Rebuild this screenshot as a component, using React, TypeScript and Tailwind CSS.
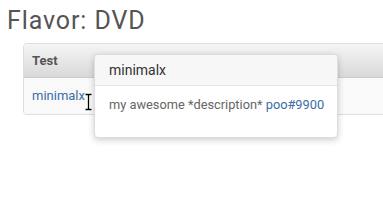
export default function App() {
  return (
    <div
      className="relative h-[214px] w-[383px] overflow-hidden bg-white"
      style={{ fontFamily: "Roboto, 'Liberation Sans', sans-serif" }}
    >
      <h2 className="pl-[7px] pt-[6px] text-[25px] leading-[29px] font-normal tracking-[0.9px] text-[#555]">
        Flavor: DVD
      </h2>

      <div className="ml-[23px] mt-[8px] w-[400px] overflow-hidden rounded-l-[4px] border border-[#ddd]">
        <div className="h-[34px] border-b border-[#ccc] bg-gradient-to-b from-[#f5f5f5] to-[#d9d9d9] pl-[8px] text-[13px] leading-[34px] font-bold text-[#555]">
          Test
        </div>
        <div className="h-[36px] bg-[#f9f9f9] pl-[8px] text-[13px] leading-[36px] text-[#3a6ea5]">
          minimalx
        </div>
      </div>

      <div className="absolute left-[94px] top-[54px] w-[244px] rounded-[4px] border border-[#ddd] bg-white shadow-[0_2px_6px_rgba(0,0,0,0.2)]">
        <div className="h-[31px] rounded-t-[4px] border-b border-[#e5e5e5] bg-[#f7f7f7] pl-[14px] text-[14px] leading-[31px] text-[#333]">
          minimalx
        </div>
        <div className="h-[51px] pl-[14px] pt-[10px] text-[12.8px] leading-[18px] text-[#666]">
          my awesome *description* <span className="text-[#3a6ea5]">poo#9900</span>
        </div>
      </div>

      <svg className="absolute left-[84px] top-[93px]" width="9" height="18" viewBox="0 0 9 18">
        <path
          d="M1.5 1.5h2.5l.5.5.5-.5h2.5M4.5 2v14M1.5 16.5h2.5l.5-.5.5.5h2.5"
          fill="none"
          stroke="#fff"
          strokeWidth="3"
        />
        <path
          d="M1.5 1.5h2.5l.5.5.5-.5h2.5M4.5 2v14M1.5 16.5h2.5l.5-.5.5.5h2.5"
          fill="none"
          stroke="#000"
          strokeWidth="1.3"
        />
      </svg>
    </div>
  );
}
